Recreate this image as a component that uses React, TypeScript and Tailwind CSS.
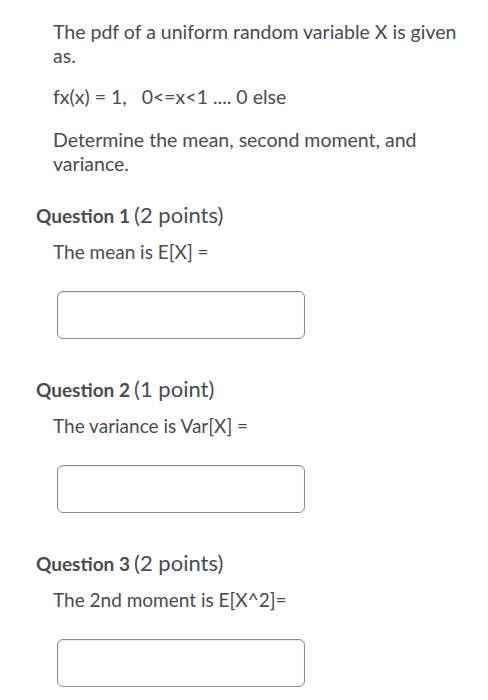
const questions = [
  { n: 1, points: "2 points", text: "The mean is E[X] =" },
  { n: 2, points: "1 point", text: "The variance is Var[X] =" },
  { n: 3, points: "2 points", text: "The 2nd moment is E[X^2]=" },
];

const App = () => {
  return (
    <div
      className="min-h-[700px] bg-white pl-[36px] pt-[20px] text-[#494c4e]"
      style={{ fontFamily: "Lato, 'Noto Sans', sans-serif" }}
    >
      {/* Question stem */}
      <div className="ml-[17px] w-[424px] text-[19.5px] leading-[24px]">
        <p>The pdf of a uniform random variable X is given as.</p>
        <p className="mt-[17px]">fx(x) = 1,&nbsp;&nbsp; 0&lt;=x&lt;1 .... 0 else</p>
        <p className="mt-[19px]">Determine the mean, second moment, and variance.</p>
      </div>

      {/* Questions */}
      <div className="mt-[25px] flex flex-col gap-[36px]">
        {questions.map((q) => (
          <div key={q.n}>
            <h2 className="leading-[28px]">
              <span className="text-[19px] font-bold">Question {q.n}</span>{" "}
              <span className="text-[22px]">({q.points})</span>
            </h2>
            <p className="mt-[9px] pl-[17px] text-[19px] leading-[24px]">{q.text}</p>
            <input
              type="text"
              className="mt-[27px] ml-[21px] block h-[48px] w-[248px] rounded-[6px] border border-[#8a8a8a] bg-white px-2 shadow-[inset_0_1px_1px_rgba(0,0,0,0.08)]"
            />
          </div>
        ))}
      </div>
    </div>
  );
};

export default App;
